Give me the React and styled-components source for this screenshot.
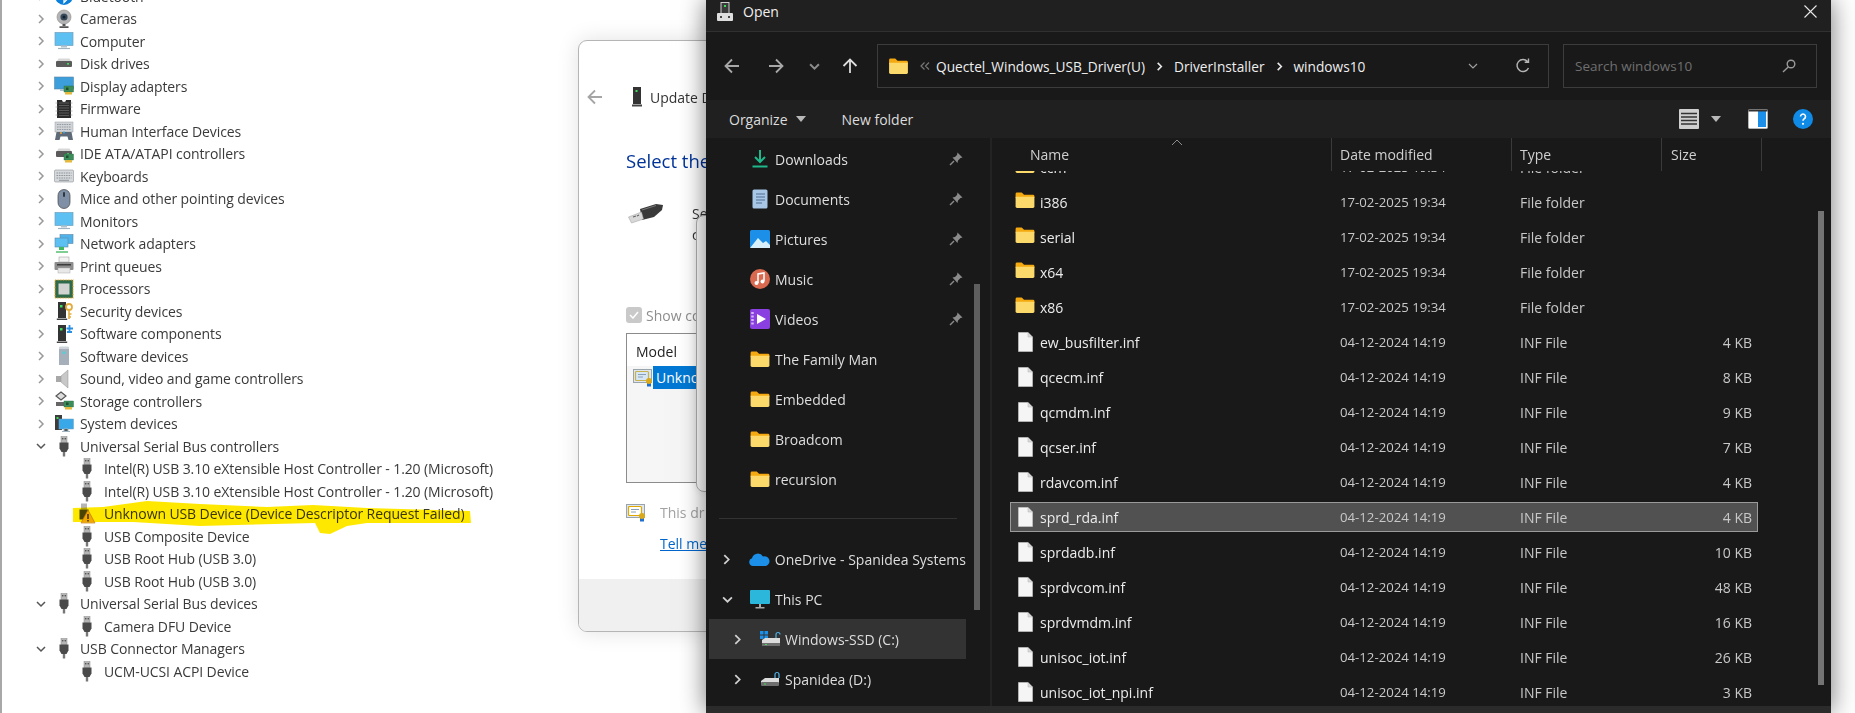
import React from 'react';
import styled, { createGlobalStyle } from 'styled-components';

const GlobalStyle = createGlobalStyle`
  html, body {
    margin: 0;
    padding: 0;
    background: #fff;
    overflow: hidden;
  }
  * { box-sizing: border-box; }
`;

const FONT = '"Open Sans", "Noto Sans", "Liberation Sans", sans-serif';

const Desktop = styled.div`
  position: relative;
  width: 1855px;
  height: 713px;
  overflow: hidden;
  background: #fff;
  font-family: ${FONT};
  font-size: 14px;
  filter: blur(0.3px);
`;

/* ---------- device manager tree ---------- */

const Tree = styled.div`
  width: 578px;
  height: 713px;
  overflow: hidden;
  border-left: 2px solid #a8a8a8;
  color: #3a3a3a;
`;

const TreeInner = styled.div`
  margin-top: -15px;
`;

const TreeRow = styled.div`
  position: relative;
  display: flex;
  align-items: center;
  height: 22.5px;
  padding-left: ${({ $child }) => ($child ? '76px' : '34px')};
  white-space: nowrap;
  letter-spacing: -0.1px;
`;

const TreeToggle = styled.span`
  display: flex;
  justify-content: center;
  width: 10px;
  margin-right: 7px;
`;

const TreeIconBox = styled.span`
  display: flex;
  justify-content: center;
  width: 22px;
  margin-right: 5px;
`;

const ChildIconBox = styled.span`
  display: flex;
  justify-content: center;
  width: 18px;
  margin-right: 8px;
`;

const Highlight = styled.svg`
  position: absolute;
  left: 0;
  top: 0;
  width: 578px;
  height: 713px;
  mix-blend-mode: multiply;
  pointer-events: none;
`;

/* ---------- update driver dialog ---------- */

const Dialog = styled.div`
  position: absolute;
  left: 578px;
  top: 40px;
  width: 640px;
  height: 592px;
  display: flex;
  flex-direction: column;
  overflow: hidden;
  background: #fff;
  border: 1px solid #b5b5b5;
  border-radius: 9px;
  box-shadow: 0 0 22px rgba(0, 0, 0, 0.12);
  color: #333;
`;

const DialogHeader = styled.div`
  display: flex;
  align-items: center;
  height: 24px;
  margin-top: 44px;
  padding-left: 8px;
  white-space: nowrap;
`;

const DialogBack = styled.span`
  display: flex;
  margin-right: 29px;
`;

const DialogDeviceIcon = styled.span`
  display: flex;
  margin-right: 8px;
`;

const DialogTitle = styled.div`
  margin: 38px 0 0 47px;
  height: 28px;
  font-size: 18.5px;
  line-height: 28px;
  color: #003399;
  white-space: nowrap;
`;

const DriverRow = styled.div`
  display: flex;
  margin-top: 28px;
  padding-left: 49px;
  height: 42px;
`;

const DriverText = styled.div`
  margin-left: 27px;
  line-height: 21px;
  white-space: nowrap;
`;

const ShowRow = styled.div`
  display: flex;
  align-items: center;
  gap: 4px;
  height: 16px;
  margin: 62px 0 0 47px;
  color: #8d8d8d;
  white-space: nowrap;
`;

const CheckBox = styled.span`
  display: flex;
  align-items: center;
  justify-content: center;
  width: 16px;
  height: 16px;
  border-radius: 3px;
  background: #c9c9c9;
`;

const ModelList = styled.div`
  width: 520px;
  height: 150px;
  margin: 10px 0 0 47px;
  background: linear-gradient(90deg, #f6f6f6, #ededed);
  border: 1px solid #8c8c8c;
`;

const ModelHead = styled.div`
  display: flex;
  align-items: center;
  height: 32px;
  padding: 3px 0 0 9px;
  background: #fff;
  color: #222;
`;

const ModelItem = styled.div`
  display: flex;
  align-items: center;
  height: 23px;
  padding-left: 6px;
`;

const ModelSelected = styled.span`
  display: flex;
  align-items: center;
  min-width: 60px;
  height: 23px;
  padding: 0 3px;
  background: #0078d4;
  color: #fff;
  white-space: nowrap;
`;

const WarnRow = styled.div`
  display: flex;
  margin: 21px 0 0 47px;
`;

const WarnText = styled.div`
  display: flex;
  flex-direction: column;
  gap: 13px;
  margin-left: 14px;
  line-height: 18px;
  white-space: nowrap;
  color: #a2a2a2;
`;

const WarnLink = styled.span`
  color: #0066cc;
  text-decoration: underline;
`;

const DialogFooter = styled.div`
  margin-top: auto;
  height: 52px;
  background: #f0f0f0;
`;

const UnderWindow = styled.div`
  position: absolute;
  left: 696px;
  top: 215px;
  width: 200px;
  height: 277px;
  background: #fff;
  border: 1px solid #b0b0b0;
  border-radius: 8px;
  box-shadow: 0 0 10px rgba(0, 0, 0, 0.1);
`;

/* ---------- dark open dialog ---------- */

const OpenWindow = styled.div`
  position: absolute;
  left: 706px;
  top: 0;
  width: 1125px;
  height: 713px;
  display: flex;
  flex-direction: column;
  background: #191919;
  color: #e6e6e6;
  box-shadow: 0 0 24px rgba(0, 0, 0, 0.55);
`;

const TitleBar = styled.div`
  display: flex;
  align-items: center;
  flex: none;
  height: 32px;
  padding: 0 14px 8px 11px;
  background: #202020;
  border-bottom: 1px solid #303030;
  color: #f0f0f0;
`;

const TitleText = styled.span`
  margin-left: 10px;
`;

const CloseButton = styled.span`
  display: flex;
  margin-left: auto;
`;

const AddressBar = styled.div`
  display: flex;
  align-items: center;
  flex: none;
  height: 68px;
  padding-left: 8px;
  background: #191919;
`;

const NavSlot = styled.span`
  display: flex;
  justify-content: center;
  width: ${({ $w }) => $w}px;
`;

const AddressBox = styled.div`
  display: flex;
  align-items: center;
  width: 672px;
  height: 44px;
  margin-left: 3px;
  padding-left: 10px;
  border: 1px solid #3c3c3c;
  white-space: nowrap;
  color: #efefef;
`;

const BackMarks = styled.svg`
  margin: 0 6px 0 11px;
`;

const Crumb = styled.span`
  font-size: 13.7px;
`;

const CrumbSep = styled.span`
  display: flex;
  justify-content: center;
  width: 29px;
`;

const AddressEnd = styled.span`
  display: flex;
  align-items: center;
  gap: 37px;
  margin-left: auto;
  padding-right: 17px;
`;

const SearchBox = styled.div`
  display: flex;
  align-items: center;
  justify-content: space-between;
  width: 254px;
  height: 44px;
  margin-left: 14px;
  padding: 0 20px 0 11px;
  border: 1px solid #3c3c3c;
  font-size: 13.5px;
  color: #6f6f6f;
`;

const ToolBar = styled.div`
  display: flex;
  align-items: center;
  flex: none;
  height: 38px;
  padding: 0 18px 0 23px;
  background: #202020;
  color: #dcdcdc;
`;

const ToolLabel = styled.span`
  margin-left: ${({ $ml }) => $ml || 0}px;
  margin-right: ${({ $mr }) => $mr || 0}px;
`;

const ToolIcons = styled.div`
  display: flex;
  align-items: center;
  margin-left: auto;
`;

const ToolIcon = styled.span`
  display: flex;
  margin-left: ${({ $ml }) => $ml || 0}px;
`;

const Body = styled.div`
  position: relative;
  display: flex;
  flex: 1;
  min-height: 0;
`;

const Sidebar = styled.div`
  position: relative;
  flex: none;
  width: 286px;
  padding-top: 1px;
  border-right: 2px solid #232323;
  overflow: hidden;
`;

const NavRow = styled.div`
  display: flex;
  align-items: center;
  width: 257px;
  height: 40px;
  margin-left: 3px;
  padding-left: ${({ $level }) => ($level === 2 ? 20 : 10)}px;
  background: ${({ $active }) => ($active ? '#333333' : 'transparent')};
  color: #dedede;
  white-space: nowrap;
`;

const NavChevron = styled.span`
  display: flex;
  justify-content: center;
  width: 16px;
  margin-right: 14px;
`;

const NavIcon = styled.span`
  display: flex;
  justify-content: center;
  width: 22px;
  margin-right: 4px;
`;

const NavPin = styled.span`
  display: flex;
  margin-left: auto;
  margin-right: 3px;
`;

const NavDivider = styled.div`
  width: 238px;
  height: 1px;
  margin: 19px 0 20px 13px;
  background: #333;
`;

const SideScroll = styled.div`
  position: absolute;
  left: 268px;
  top: 146px;
  width: 6px;
  height: 326px;
  background: #5e5e5e;
`;

const FilePane = styled.div`
  position: relative;
  flex: 1;
  display: flex;
  flex-direction: column;
  min-width: 0;
`;

const FileHead = styled.div`
  display: flex;
  flex: none;
  height: 33px;
  padding-left: 8px;
  background: #191919;
  color: #d0d0d0;
  z-index: 1;
`;

const HeadCell = styled.div`
  position: relative;
  display: flex;
  align-items: center;
  width: ${({ $w }) => $w}px;
  padding-left: ${({ $pad }) => $pad}px;
  border-right: 1px solid #3a3a3a;
`;

const SortMark = styled.span`
  position: absolute;
  left: 171px;
  top: 1px;
  display: flex;
`;

const FileScroll = styled.div`
  flex: 1;
  overflow: hidden;
`;

const FileRows = styled.div`
  display: flex;
  flex-direction: column;
  gap: 5px;
  margin-top: -19px;
  padding-left: 18px;
`;

const FileRow = styled.div`
  display: grid;
  grid-template-columns: 321px 180px 150px 95px;
  align-items: center;
  width: 748px;
  height: 30px;
  background: ${({ $selected }) => ($selected ? '#515151' : 'transparent')};
  border: 1px solid ${({ $selected }) => ($selected ? '#9a9a9a' : 'transparent')};
  color: #c8c8c8;
  white-space: nowrap;
`;

const NameCell = styled.div`
  display: flex;
  align-items: center;
  padding-left: 4px;
  color: #ececec;
`;

const FileIconBox = styled.span`
  display: flex;
  justify-content: center;
  width: 20px;
  margin-right: 5px;
  margin-bottom: ${({ $folder }) => ($folder ? 4 : 0)}px;
`;

const DateCell = styled.div`
  padding-left: 8px;
  font-size: 13.2px;
`;

const TypeCell = styled.div`
  padding-left: 8px;
`;

const SizeCell = styled.div`
  padding-right: 5px;
  text-align: right;
`;

const ListScroll = styled.div`
  position: absolute;
  right: 7px;
  top: 73px;
  width: 6px;
  height: 474px;
  background: #747474;
`;

const BottomBar = styled.div`
  flex: none;
  height: 7px;
  background: #2b2b2b;
`;

/* ---------- icons ---------- */

const Chevron = ({ open, color = '#8c8c8c', size = 10, width = 1.5 }) => (
  <svg width={size} height={size} viewBox="0 0 10 10" fill="none" stroke={color} strokeWidth={width}>
    {open ? <path d="M1 3l4 4 4-4" /> : <path d="M3 1l4 4-4 4" />}
  </svg>
);

const UsbPlug = () => (
  <svg width="12" height="21" viewBox="0 0 12 21">
    <rect x="3" y="0.5" width="6" height="6" fill="#b5b5b5" stroke="#8a8a8a" strokeWidth="0.5" />
    <rect x="4" y="2" width="1.4" height="1.4" fill="#555" />
    <rect x="6.6" y="2" width="1.4" height="1.4" fill="#555" />
    <path d="M1.5 6.5h9v6l-2 3.5h-5l-2-3.5z" fill="#4a4a4a" />
    <rect x="4.8" y="16" width="2.4" height="4.5" fill="#777" />
  </svg>
);

const MonitorArt = ({ fill = '#5cc0f2' }) => (
  <>
    <rect x="1" y="1.5" width="18" height="13" fill={fill} stroke="#6f9fbd" strokeWidth="0.7" />
    <path d="M7 14.5h6v2H7z" fill="#b0c4d0" />
    <path d="M4 17.5h12" stroke="#a0b4c0" strokeWidth="1.2" />
  </>
);

const CardArt = () => (
  <>
    <rect x="10" y="10" width="9.5" height="6" fill="#3c8d5a" stroke="#2a6a42" strokeWidth="0.4" />
    <rect x="12" y="11.5" width="2.5" height="2.5" fill="#1f4d30" />
    <rect x="11" y="16" width="7" height="2.5" fill="#e4b93c" />
  </>
);

const TowerArt = ({ fill = '#333', led = '#3fdc5a' }) => (
  <>
    <rect x="4" y="1" width="8" height="16" fill={fill} />
    <rect x="6" y="4" width="2.5" height="2.5" fill={led} />
    <path d="M2.8 17.5h10.4v1.5H2.8z" fill="#444" />
  </>
);

const DiskArt = () => (
  <>
    <path d="M3 7l1.5-2.5h11L17 7z" fill="#d8d8d8" />
    <rect x="2" y="7" width="16" height="6" rx="1" fill="#5b5b5b" />
    <rect x="13" y="9" width="2" height="1.6" fill="#3fdc5a" />
  </>
);

const treeArt = {
  bluetooth: (
    <>
      <circle cx="10" cy="10" r="9" fill="#0a7fdc" />
      <path d="M6.5 6.5l7 6.5-3.5 3.5V3.5L13.5 7l-7 6.5" fill="none" stroke="#fff" strokeWidth="1.3" />
    </>
  ),
  camera: (
    <>
      <circle cx="10" cy="8" r="7" fill="#b4b4b4" stroke="#8a8a8a" strokeWidth="0.6" />
      <circle cx="10" cy="8" r="3.6" fill="#3a4a5c" />
      <circle cx="10" cy="8" r="1.5" fill="#14202c" />
      <path d="M8.5 15h3v2h-3zM5.5 17.2h9V19h-9z" fill="#555" />
    </>
  ),
  computer: <MonitorArt />,
  disk: <DiskArt />,
  display: (
    <>
      <rect x="0.5" y="1" width="19" height="12" fill="#3c9fdc" stroke="#5d87a5" strokeWidth="0.6" />
      <path d="M6 13h6v2H6z" fill="#b0c4d0" />
      <CardArt />
    </>
  ),
  firmware: (
    <>
      <path d="M3 1h5a2 2 0 0 0 4 0h5v18H3z" fill="#2c2c2c" />
      <path d="M5 4h10M5 6.5h10M5 9h10M5 11.5h10M5 14h10M5 16.5h10" stroke="#7a7a7a" strokeWidth="0.6" />
      <path d="M1.5 4h2M1.5 8h2M1.5 12h2M1.5 16h2M16.5 4h2M16.5 8h2M16.5 12h2M16.5 16h2" stroke="#aaa" strokeWidth="0.8" />
    </>
  ),
  hid: (
    <>
      <rect x="1" y="1" width="18" height="10" fill="#d0d4d8" stroke="#9aa0a6" strokeWidth="0.5" />
      <path d="M3 3.5h14M3 6h14M3 8.5h14" stroke="#8e9499" strokeWidth="0.9" strokeDasharray="1.6 0.8" />
      <path d="M1 19l1.5-8h15L19 19h-4.5l-1-3.5h-7L5.5 19z" fill="#5e6a78" />
      <circle cx="7" cy="12" r="1.1" fill="#e8a23a" />
      <circle cx="10" cy="11.5" r="1.1" fill="#3c9fdc" />
    </>
  ),
  ide: (
    <>
      <DiskArt />
      <CardArt />
    </>
  ),
  keyboard: (
    <>
      <rect x="0.5" y="4" width="19" height="12" rx="1" fill="#d6d9dc" stroke="#8e9499" strokeWidth="0.6" />
      <path d="M2.5 7h15M2.5 9.5h15M2.5 12h15" stroke="#8e9499" strokeWidth="1" strokeDasharray="1.6 0.8" />
      <path d="M5 14.3h10" stroke="#8e9499" strokeWidth="1" />
    </>
  ),
  mouse: (
    <>
      <rect x="4" y="0.5" width="12" height="19" rx="6" fill="#7f8fa6" stroke="#444" strokeWidth="0.7" />
      <rect x="9" y="3" width="2" height="5" rx="1" fill="#2e3640" />
    </>
  ),
  monitor: <MonitorArt />,
  network: (
    <>
      <rect x="6" y="0.5" width="13" height="9" fill="#4fb2ea" stroke="#5d87a5" strokeWidth="0.6" />
      <rect x="1" y="4" width="13" height="9" fill="#5cc0f2" stroke="#5d87a5" strokeWidth="0.6" />
      <path d="M5 13h5v3H5z" fill="#3fb860" />
      <path d="M2 17h12v2H2z" fill="#7fcf94" />
    </>
  ),
  printer: (
    <>
      <rect x="5" y="1" width="10" height="5" fill="#f2f2f2" stroke="#999" strokeWidth="0.5" />
      <rect x="0.5" y="6" width="19" height="8" rx="1" fill="#8d8d8d" />
      <rect x="3" y="8" width="14" height="1.5" fill="#3c3c3c" />
      <rect x="4" y="12" width="12" height="5" fill="#e8e8e8" stroke="#aaa" strokeWidth="0.5" />
    </>
  ),
  cpu: (
    <>
      <rect x="1" y="1" width="18" height="18" fill="#2f6b4a" stroke="#d6a73a" strokeWidth="1.2" strokeDasharray="1 0.6" />
      <rect x="4.5" y="4.5" width="11" height="11" fill="#d2d4d2" />
    </>
  ),
  security: (
    <>
      <TowerArt />
      <circle cx="15" cy="6" r="3" fill="none" stroke="#e2ac3f" strokeWidth="1.8" />
      <path d="M15 9v9M15 13h2.5M15 16h2" stroke="#e2ac3f" strokeWidth="1.6" />
    </>
  ),
  softcomp: (
    <>
      <TowerArt />
      <path d="M15.5 1v7M12.5 4.5h6.5M13 8h5" stroke="#2a8fe0" strokeWidth="1.8" />
    </>
  ),
  softdev: (
    <>
      <path d="M5 1h10v18H5z" fill="#a5b0ba" />
      <path d="M5 1l1.5-0.5h7L15 1v2H5z" fill="#ced5da" />
      <rect x="8.8" y="5.5" width="2.4" height="2.4" fill="#3fd8e4" />
    </>
  ),
  sound: (
    <>
      <path d="M2 7h5v6H2z" fill="#a8a8a8" />
      <path d="M7 7l7-6v18l-7-6z" fill="#c8c8c8" stroke="#909090" strokeWidth="0.5" />
    </>
  ),
  storage: (
    <>
      <path d="M7 1l5 4-5 4-5-4z" fill="#ddd" stroke="#555" strokeWidth="1.2" />
      <path d="M2 11h9v4H2z" fill="#666" />
      <CardArt />
    </>
  ),
  system: (
    <>
      <rect x="1" y="1" width="7" height="15" fill="#3c3c3c" />
      <rect x="2.5" y="3" width="2" height="2" fill="#3fdc5a" />
      <rect x="5" y="5" width="14.5" height="10" fill="#38a8e8" stroke="#6f9fbd" strokeWidth="0.5" />
      <path d="M10 15h4v2h-4zM8 17.5h8" stroke="#a0b4c0" strokeWidth="1" />
    </>
  ),
};

const TreeIcon = ({ name }) =>
  name === 'usb' ? (
    <UsbPlug />
  ) : (
    <svg width="20" height="20" viewBox="0 0 20 20">
      {treeArt[name]}
    </svg>
  );

const WarningPlug = () => (
  <svg width="18" height="21" viewBox="0 0 18 21">
    <rect x="3" y="0.5" width="6" height="6" fill="#b5b5b5" />
    <path d="M1.5 6.5h9v10h-9z" fill="#4a4a4a" />
    <path d="M10 7l7 13H3z" fill="#f2b92e" stroke="#c77f12" strokeWidth="0.7" />
    <path d="M10 11v5M10 17v1.6" stroke="#222" strokeWidth="1.3" />
  </svg>
);

const Certificate = ({ color = '#e0a800', frame = '#9aa4ad', fill = '#fff' }) => (
  <svg width="20" height="18" viewBox="0 0 20 18">
    <rect x="0.5" y="0.5" width="18" height="13" fill="#dfe6ee" stroke={frame} />
    <rect x="2.5" y="2.5" width="13" height="9" rx="1" fill={fill} stroke={color} strokeWidth="1.2" />
    <path d="M5 5.5h8M5 8h5" stroke="#8aa0b5" strokeWidth="1" />
    <path d="M14 13h4v4.5h-4z" fill="#1f6fd0" />
    <circle cx="16" cy="12" r="3" fill="#d9a91b" />
  </svg>
);

const UsbCable = () => (
  <svg width="37" height="22" viewBox="0 0 37 22">
    <path d="M12 6l16-5 7 1-1 5-8 7-12 3z" fill="#3a3a3a" />
    <path d="M14 7l14-4.5" stroke="#777" strokeWidth="1" />
    <path d="M0.5 14l13-5 2 7-12 4z" fill="#d8d8d8" stroke="#9a9a9a" strokeWidth="0.5" />
    <path d="M5 14l3-1M9 13l2-1" stroke="#666" strokeWidth="1.2" />
  </svg>
);

const Folder = ({ w = 20, h = 16 }) => (
  <svg width={w} height={h} viewBox="0 0 20 17">
    <path d="M0 2a1.5 1.5 0 0 1 1.5-1.5h5L9 3h9.5A1.5 1.5 0 0 1 20 4.5V6H0z" fill="#f3a90f" />
    <path d="M0 5h20v10.5a1.5 1.5 0 0 1-1.5 1.5h-17A1.5 1.5 0 0 1 0 15.5z" fill="#fbd96a" />
  </svg>
);

const FileGlyph = () => (
  <svg width="15" height="20" viewBox="0 0 15 20">
    <path d="M0.5 0.5h9.5l4.500 4.500v14.500H0.5z" fill="#f5f5f5" stroke="#cfcfcf" strokeWidth="0.6" />
    <path d="M10 0.5V5h4.500" fill="#d9d9d9" stroke="#bdbdbd" strokeWidth="0.6" />
  </svg>
);

const ArrowSvg = styled.svg`
  transform: rotate(${({ $dir }) => ({ left: 0, right: 180, up: 90 }[$dir])}deg);
`;

const Arrow = ({ dir = 'left', color = '#9a9a9a', size = 16, width = 1.8 }) => (
  <ArrowSvg $dir={dir} width={size} height={size} viewBox="0 0 16 16" fill="none" stroke={color} strokeWidth={width}>
    <path d="M15 8H1.5M8 1.5L1.5 8 8 14.5" />
  </ArrowSvg>
);

const Pin = () => (
  <svg width="14" height="14" viewBox="0 0 14 14">
    <path d="M8.5 0.5l5 5-2 .5-2.5 2.500-.5 2.500L3.500 5.500 6 5l2-2z" fill="#8a8a8a" />
    <path d="M5 9l-4 4" stroke="#8a8a8a" strokeWidth="1.5" />
  </svg>
);

const Triangle = ({ color = '#b8b8b8' }) => (
  <svg width="10" height="6" viewBox="0 0 10 6">
    <path d="M0 0h10L5 6z" fill={color} />
  </svg>
);

const navArt = {
  downloads: (
    <svg width="16" height="18" viewBox="0 0 16 18" fill="none" stroke="#1fb88c" strokeWidth="2">
      <path d="M8 0v11M3 7l5 5 5-5M0.5 16.5h15" />
    </svg>
  ),
  documents: (
    <svg width="16" height="20" viewBox="0 0 16 20">
      <rect x="0.5" y="0.5" width="15" height="19" rx="1.5" fill="#a8c6e6" />
      <path d="M4 5h9M4 8h9M4 11h9M4 14h6" stroke="#4f6f93" strokeWidth="1" />
    </svg>
  ),
  pictures: (
    <svg width="20" height="18" viewBox="0 0 20 18">
      <rect width="20" height="18" rx="1.5" fill="#1c8fe8" />
      <path d="M0 18l8-10 5 5 3-2 4 4v3z" fill="#d8effc" />
    </svg>
  ),
  music: (
    <svg width="20" height="20" viewBox="0 0 20 20">
      <circle cx="10" cy="10" r="10" fill="#d9694f" />
      <path d="M8 14V5l6-1v8" fill="none" stroke="#fff" strokeWidth="1.5" />
      <circle cx="6.5" cy="14" r="2" fill="#fff" />
      <circle cx="12.5" cy="12.5" r="2" fill="#fff" />
    </svg>
  ),
  videos: (
    <svg width="20" height="20" viewBox="0 0 20 20">
      <rect width="20" height="20" rx="2" fill="#8a3fe0" />
      <path d="M7 5l9 5-9 5z" fill="#fff" />
      <path d="M2.5 3v14" stroke="#d5b8f5" strokeWidth="2.5" strokeDasharray="2 1.5" />
    </svg>
  ),
  folder: <Folder />,
  cloud: (
    <svg width="21" height="13" viewBox="0 0 21 13">
      <path d="M4 13a4 4 0 0 1-1-7.8A6 6 0 0 1 14 3.5a4.8 4.8 0 0 1 3 9.500z" fill="#1c8fe8" />
    </svg>
  ),
  pc: (
    <svg width="20" height="19" viewBox="0 0 20 19">
      <rect width="20" height="14" rx="1" fill="#2bb6dc" />
      <path d="M9 14h2v3H9zM5.5 17h9v1.500h-9z" fill="#a9a9a9" />
    </svg>
  ),
  ssd: (
    <svg width="21" height="17" viewBox="0 0 21 17">
      <rect x="0" y="0" width="3.5" height="3.5" fill="#1c8fe8" />
      <rect x="4.5" y="0" width="3.5" height="3.5" fill="#1c8fe8" />
      <rect x="0" y="4.5" width="3.5" height="3.5" fill="#1c8fe8" />
      <rect x="4.5" y="4.5" width="3.5" height="3.5" fill="#1c8fe8" />
      <path d="M2 9l3-2h15v6H2z" fill="#dcdcdc" />
      <rect x="2" y="12" width="18" height="3" fill="#6e6e6e" />
      <rect x="5" y="13" width="2" height="1" fill="#3fdc5a" />
      <path d="M16 7V3.500a2 2 0 0 1 4 0" fill="none" stroke="#4fb2ea" strokeWidth="1.2" />
    </svg>
  ),
  drive: (
    <svg width="20" height="17" viewBox="0 0 20 17">
      <path d="M1 10l4-3h14v5H1z" fill="#dcdcdc" />
      <rect x="1" y="11" width="18" height="4" rx="1" fill="#6e6e6e" />
      <rect x="4" y="12.5" width="2" height="1" fill="#3fdc5a" />
      <path d="M15 7V3.500a2 2 0 0 1 4 0V7" fill="none" stroke="#4fb2ea" strokeWidth="1.2" />
    </svg>
  ),
};

/* ---------- data ---------- */

const treeRows = [
  { label: 'Bluetooth', icon: 'bluetooth' },
  { label: 'Cameras', icon: 'camera' },
  { label: 'Computer', icon: 'computer' },
  { label: 'Disk drives', icon: 'disk' },
  { label: 'Display adapters', icon: 'display' },
  { label: 'Firmware', icon: 'firmware' },
  { label: 'Human Interface Devices', icon: 'hid' },
  { label: 'IDE ATA/ATAPI controllers', icon: 'ide' },
  { label: 'Keyboards', icon: 'keyboard' },
  { label: 'Mice and other pointing devices', icon: 'mouse' },
  { label: 'Monitors', icon: 'monitor' },
  { label: 'Network adapters', icon: 'network' },
  { label: 'Print queues', icon: 'printer' },
  { label: 'Processors', icon: 'cpu' },
  { label: 'Security devices', icon: 'security' },
  { label: 'Software components', icon: 'softcomp' },
  { label: 'Software devices', icon: 'softdev' },
  { label: 'Sound, video and game controllers', icon: 'sound' },
  { label: 'Storage controllers', icon: 'storage' },
  { label: 'System devices', icon: 'system' },
  { label: 'Universal Serial Bus controllers', icon: 'usb', open: true },
  { label: 'Intel(R) USB 3.10 eXtensible Host Controller - 1.20 (Microsoft)', child: true },
  { label: 'Intel(R) USB 3.10 eXtensible Host Controller - 1.20 (Microsoft)', child: true },
  { label: 'Unknown USB Device (Device Descriptor Request Failed)', child: true, warn: true },
  { label: 'USB Composite Device', child: true },
  { label: 'USB Root Hub (USB 3.0)', child: true },
  { label: 'USB Root Hub (USB 3.0)', child: true },
  { label: 'Universal Serial Bus devices', icon: 'usb', open: true },
  { label: 'Camera DFU Device', child: true },
  { label: 'USB Connector Managers', icon: 'usb', open: true },
  { label: 'UCM-UCSI ACPI Device', child: true },
];

const pinnedRows = [
  { label: 'Downloads', icon: 'downloads', pin: true },
  { label: 'Documents', icon: 'documents', pin: true },
  { label: 'Pictures', icon: 'pictures', pin: true },
  { label: 'Music', icon: 'music', pin: true },
  { label: 'Videos', icon: 'videos', pin: true },
  { label: 'The Family Man', icon: 'folder' },
  { label: 'Embedded', icon: 'folder' },
  { label: 'Broadcom', icon: 'folder' },
  { label: 'recursion', icon: 'folder' },
];

const FOLDER_DATE = '17-02-2025 19:34';
const INF_DATE = '04-12-2024 14:19';

const files = [
  { name: 'ccm', date: FOLDER_DATE, type: 'File folder', folder: true },
  { name: 'i386', date: FOLDER_DATE, type: 'File folder', folder: true },
  { name: 'serial', date: FOLDER_DATE, type: 'File folder', folder: true },
  { name: 'x64', date: FOLDER_DATE, type: 'File folder', folder: true },
  { name: 'x86', date: FOLDER_DATE, type: 'File folder', folder: true },
  { name: 'ew_busfilter.inf', size: '4 KB' },
  { name: 'qcecm.inf', size: '8 KB' },
  { name: 'qcmdm.inf', size: '9 KB' },
  { name: 'qcser.inf', size: '7 KB' },
  { name: 'rdavcom.inf', size: '4 KB' },
  { name: 'sprd_rda.inf', size: '4 KB', selected: true },
  { name: 'sprdadb.inf', size: '10 KB' },
  { name: 'sprdvcom.inf', size: '48 KB' },
  { name: 'sprdvmdm.inf', size: '16 KB' },
  { name: 'unisoc_iot.inf', size: '26 KB' },
  { name: 'unisoc_iot_npi.inf', size: '3 KB' },
];

const NavItem = ({ label, icon, pin, level = 1, chevron, active }) => (
  <NavRow $level={level} $active={active}>
    <NavChevron>
      {chevron && <Chevron open={chevron === 'open'} color="#d0d0d0" size={11} width={1.6} />}
    </NavChevron>
    <NavIcon>{navArt[icon]}</NavIcon>
    {label}
    {pin && (
      <NavPin>
        <Pin />
      </NavPin>
    )}
  </NavRow>
);

const App = () => (
  <Desktop>
    <GlobalStyle />

    <Tree>
      <TreeInner>
        {treeRows.map((row, i) =>
          row.child ? (
            <TreeRow key={i} $child>
              <ChildIconBox>{row.warn ? <WarningPlug /> : <UsbPlug />}</ChildIconBox>
              {row.label}
            </TreeRow>
          ) : (
            <TreeRow key={i}>
              <TreeToggle>
                <Chevron open={row.open} color={row.open ? '#555' : '#999'} />
              </TreeToggle>
              <TreeIconBox>
                <TreeIcon name={row.icon} />
              </TreeIconBox>
              {row.label}
            </TreeRow>
          )
        )}
      </TreeInner>
    </Tree>
    <Highlight viewBox="0 0 578 713">
      <path
        d="M73 508L103 507L147 501L200 504L267 507L313 505L367 508L470 511L471 523L367 523L347 526L330 534L320 533L315 523L200 526L133 522L73 522Z"
        fill="#ffe800"
      />
    </Highlight>

    <Dialog>
      <DialogHeader>
        <DialogBack>
          <Arrow color="#a5a5a5" />
        </DialogBack>
        <DialogDeviceIcon>
          <svg width="10" height="20" viewBox="0 0 10 20">
            <rect x="1" y="0" width="8" height="17" fill="#333" />
            <rect x="3.5" y="3" width="2" height="2" fill="#3fdc5a" />
            <rect y="17.5" width="10" height="2" fill="#444" />
          </svg>
        </DialogDeviceIcon>
        Update D
      </DialogHeader>
      <DialogTitle>Select the</DialogTitle>
      <DriverRow>
        <UsbCable />
        <DriverText>
          Se
          <br />
          c
        </DriverText>
      </DriverRow>
      <ShowRow>
        <CheckBox>
          <svg width="10" height="8" viewBox="0 0 10 8" fill="none" stroke="#fff" strokeWidth="1.5">
            <path d="M1 4l3 3 5-6" />
          </svg>
        </CheckBox>
        Show co
      </ShowRow>
      <ModelList>
        <ModelHead>Model</ModelHead>
        <ModelItem>
          <Certificate color="#c9b24a" fill="#d7e6f5" />
          <ModelSelected>Unkno</ModelSelected>
        </ModelItem>
      </ModelList>
      <WarnRow>
        <Certificate />
        <WarnText>
          <span>This dr</span>
          <WarnLink>Tell me</WarnLink>
        </WarnText>
      </WarnRow>
      <DialogFooter />
    </Dialog>
    <UnderWindow />

    <OpenWindow>
      <TitleBar>
        <svg width="16" height="20" viewBox="0 0 16 20">
          <rect x="4" y="0.5" width="8" height="11" fill="#3a3a3a" stroke="#cfcfcf" />
          <rect x="7" y="3" width="2" height="2" fill="#3fdc5a" />
          <rect x="0" y="11" width="16" height="8" rx="1" fill="#dedede" />
          <rect x="3" y="14" width="2" height="2" fill="#444" />
          <rect x="11" y="14" width="2" height="2" fill="#444" />
        </svg>
        <TitleText>Open</TitleText>
        <CloseButton>
          <svg width="13" height="13" viewBox="0 0 13 13" stroke="#e8e8e8" strokeWidth="1.1">
            <path d="M0.5 0.5l12 12M12.5 0.5l-12 12" />
          </svg>
        </CloseButton>
      </TitleBar>

      <AddressBar>
        <NavSlot $w={36}>
          <Arrow color="#a8a8a8" />
        </NavSlot>
        <NavSlot $w={52}>
          <Arrow dir="right" color="#a8a8a8" />
        </NavSlot>
        <NavSlot $w={24}>
          <Chevron open color="#8c8c8c" size={11} width={1.8} />
        </NavSlot>
        <NavSlot $w={48}>
          <Arrow dir="up" color="#dcdcdc" />
        </NavSlot>
        <AddressBox>
          <Folder w={21} h={16} />
          <BackMarks width="10" height="8" viewBox="0 0 10 8" fill="none" stroke="#777" strokeWidth="1.2">
            <path d="M4.5 0.5L1 4l3.500 3.500M9 0.5L5.500 4 9 7.500" />
          </BackMarks>
          <Crumb>Quectel_Windows_USB_Driver(U)</Crumb>
          <CrumbSep>
            <Chevron color="#e8e8e8" size={9} width={1.8} />
          </CrumbSep>
          <Crumb>DriverInstaller</Crumb>
          <CrumbSep>
            <Chevron color="#e8e8e8" size={9} width={1.8} />
          </CrumbSep>
          <Crumb>windows10</Crumb>
          <AddressEnd>
            <Chevron open color="#a0a0a0" size={10} width={1.2} />
            <svg width="16" height="16" viewBox="0 0 16 16" fill="none" stroke="#b5b5b5" strokeWidth="1.4">
              <path d="M13.5 10a6 6 0 1 1-1-6.500M13.500 0.5v3.800H9.700" />
            </svg>
          </AddressEnd>
        </AddressBox>
        <SearchBox>
          Search windows10
          <svg width="14" height="14" viewBox="0 0 14 14" fill="none" stroke="#9a9a9a" strokeWidth="1.4">
            <circle cx="9" cy="5" r="3.8" />
            <path d="M6.200 8L1 13" />
          </svg>
        </SearchBox>
      </AddressBar>

      <ToolBar>
        <ToolLabel $mr={8}>Organize</ToolLabel>
        <Triangle />
        <ToolLabel $ml={36}>New folder</ToolLabel>
        <ToolIcons>
          <ToolIcon>
            <svg width="20" height="20" viewBox="0 0 20 20">
              <rect width="20" height="20" rx="1" fill="#cfcfcf" />
              <path d="M2 4.500h16M2 8h16M2 11.500h16M2 15h16" stroke="#333" strokeWidth="1.4" />
            </svg>
          </ToolIcon>
          <ToolIcon $ml={12}>
            <Triangle />
          </ToolIcon>
          <ToolIcon $ml={27}>
            <svg width="20" height="20" viewBox="0 0 20 20">
              <rect x="0.5" y="0.5" width="19" height="19" rx="1" fill="#fff" stroke="#b5b5b5" />
              <rect x="10" y="2" width="8" height="16" fill="#1c8fe8" />
              <path d="M0.5 0.500h19v2h-19z" fill="#333" />
            </svg>
          </ToolIcon>
          <ToolIcon $ml={25}>
            <svg width="20" height="20" viewBox="0 0 20 20">
              <circle cx="10" cy="10" r="10" fill="#0f8ae6" />
              <path d="M7.500 7.500a2.500 2.500 0 1 1 3.800 2.200c-.9.600-1.300 1-1.300 2.100" fill="none" stroke="#fff" strokeWidth="1.6" />
              <circle cx="10" cy="14.800" r="1.1" fill="#fff" />
            </svg>
          </ToolIcon>
        </ToolIcons>
      </ToolBar>

      <Body>
        <Sidebar>
          {pinnedRows.map(row => (
            <NavItem key={row.label} {...row} />
          ))}
          <NavDivider />
          <NavItem label="OneDrive - Spanidea Systems" icon="cloud" chevron="closed" />
          <NavItem label="This PC" icon="pc" chevron="open" />
          <NavItem label="Windows-SSD (C:)" icon="ssd" chevron="closed" level={2} active />
          <NavItem label="Spanidea (D:)" icon="drive" chevron="closed" level={2} />
          <SideScroll />
        </Sidebar>

        <FilePane>
          <FileHead>
            <HeadCell $w={332} $pad={30}>
              Name
              <SortMark>
                <svg width="12" height="7" viewBox="0 0 12 7" fill="none" stroke="#8c8c8c" strokeWidth="1">
                  <path d="M1 6l5-5 5 5" />
                </svg>
              </SortMark>
            </HeadCell>
            <HeadCell $w={180} $pad={8}>Date modified</HeadCell>
            <HeadCell $w={150} $pad={8}>Type</HeadCell>
            <HeadCell $w={100} $pad={9}>Size</HeadCell>
          </FileHead>
          <FileScroll>
            <FileRows>
              {files.map(file => (
                <FileRow key={file.name} $selected={file.selected}>
                  <NameCell>
                    <FileIconBox $folder={file.folder}>{file.folder ? <Folder /> : <FileGlyph />}</FileIconBox>
                    {file.name}
                  </NameCell>
                  <DateCell>{file.date || INF_DATE}</DateCell>
                  <TypeCell>{file.type || 'INF File'}</TypeCell>
                  <SizeCell>{file.size}</SizeCell>
                </FileRow>
              ))}
            </FileRows>
          </FileScroll>
          <ListScroll />
        </FilePane>
      </Body>
      <BottomBar />
    </OpenWindow>
  </Desktop>
);

export default App;
